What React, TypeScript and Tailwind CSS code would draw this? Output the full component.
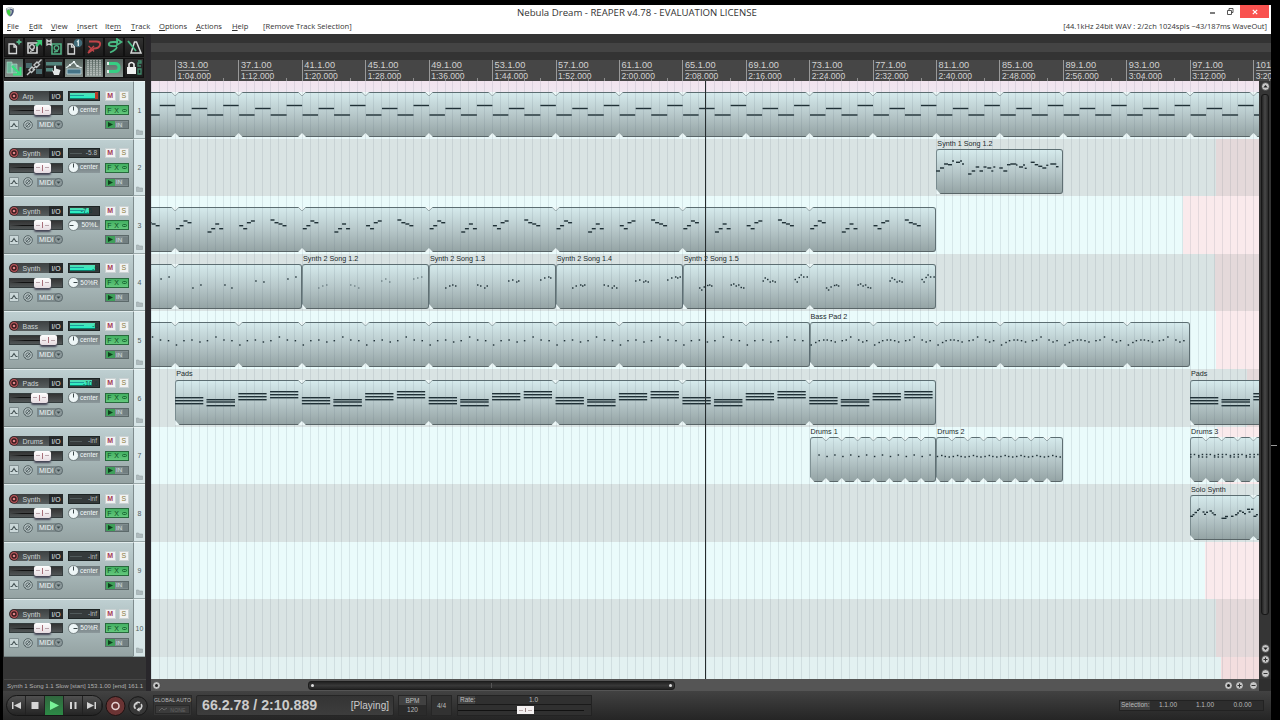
import type { ReactNode } from 'react'
import { clsx } from 'clsx'

const VIEW_START = 151
const VIEW_END = 1259
const FIRST_BAR_X = 175.2
const LOOP = 63.43
const LOOP2 = LOOP * 2

type Note = [x: number, y: number, w: number]

type ClipData = {
  name?: string
  from: number
  to: number
  loop: number
  notch?: number
  notes: Note[]
  open?: boolean
  faint?: boolean
}

type TrackData = {
  name: string
  fader: number
  pan: string
  panAngle: number
  meter?: number
  clip?: boolean
  level?: string
  tint: number
  clips: ClipData[]
}

const dots = (points: number[][]): Note[] => points.map(([x, y]) => [x, y, 1.5])

const arpNotes: Note[] = [[0.5, 23, 15.5], [16.5, 16.5, 15.5], [32, 23, 16], [48, 13.5, 15.5]]

const synthNotes: Note[] = [
  [0.7, 21.7, 4], [4.3, 18.7, 4], [8.3, 14, 4], [12.3, 15.7, 4],
  [32.3, 25, 4], [36, 21.7, 4], [40, 17, 4], [44, 21.7, 4],
  [64, 18.7, 4], [68, 21.7, 4], [71.7, 15.7, 4], [75.7, 14, 4],
  [95.3, 13, 4], [99.3, 15.7, 4], [103.3, 17, 4], [107.3, 18.7, 4],
]

const leadNotes: Note[] = [
  [0, 22, 4], [4, 19, 4], [8, 15, 4], [12, 15.7, 4], [16, 12, 2], [20, 13.3, 4], [24, 12, 2], [26, 15, 2],
  [32, 25, 3.5], [35.7, 22, 3.5], [39.7, 18, 3.5], [43.5, 22, 3.5], [47.5, 18, 3], [51.3, 19, 4], [55.3, 22, 2], [57.3, 18, 2],
  [63.3, 19, 3.5], [67.3, 22, 4], [71, 15.7, 3.5], [74.3, 15, 6], [80, 16, 1.5], [83, 18, 4], [87, 16, 2], [88.7, 19.3, 2],
  [94.7, 13.3, 4], [98.7, 15.7, 3.5], [102.3, 17.3, 4], [106.3, 19, 4], [110.3, 16.3, 2], [114.3, 15, 6], [120, 17.7, 2.5],
]

const songNotes = {
  one: dots([[17, 24], [25, 21], [49, 21], [56, 24], [80, 17], [88, 18], [112, 15], [120, 13]]),
  two: dots([[16, 24], [20, 22], [24, 21], [48, 21], [52, 22], [56, 24], [79, 17], [83, 15], [87, 18], [111, 15], [115, 14], [119, 13]]),
  three: dots([
    [16, 24], [20, 22], [23, 21], [26, 22], [48, 21], [51, 22], [55, 24], [57.5, 22],
    [79, 17], [83, 16], [87, 18], [89, 17], [111, 16], [115, 14], [119, 13], [121, 14],
  ]),
  four: dots([
    [16, 24], [19.5, 22], [24, 21], [26, 22], [28, 21], [47.5, 21], [51.5, 22], [55.5, 24], [57.5, 22], [60, 24],
    [79, 17], [83, 16], [87, 18], [89, 17], [91.5, 18], [111, 16], [115, 14], [119, 13], [121, 14], [123.5, 13],
  ]),
  five: dots([
    [16, 24], [18, 26], [20.5, 23], [24, 21.5], [26, 21], [28, 22], [47.5, 21], [50, 20], [52.5, 22], [55, 21], [57.5, 23.5], [60, 24],
    [79.5, 17], [81.5, 14], [84, 15.5], [86.5, 18], [89, 17], [91.5, 18], [111.5, 15.5], [113.5, 18], [115.5, 13.5], [117.5, 11], [120, 13], [123.5, 13],
  ]),
}

const bassNotes = dots([[0.5, 23], [8, 18.7], [16, 18], [24, 20], [31.5, 18.7], [40, 15], [48, 18], [56, 18.7]])

const bassPadNotes = dots([
  [0.5, 23], [5, 20.5], [8.5, 18.7], [13, 18], [16.5, 18], [20.5, 18.7], [24.5, 20], [31.5, 18.7], [35.5, 18], [40, 15], [48, 18], [52, 20], [56, 18.7],
])

const padNotes: Note[] = [
  [0, 17.7, 28.3], [0, 20.7, 28.3], [0, 23.7, 28.3],
  [31.5, 19.7, 28.5], [31.5, 22, 28.5], [31.5, 25.7, 28.5],
  [63.3, 13.7, 28.3], [63.3, 16.7, 28.3], [63.3, 19.7, 28.3],
  [95, 11.7, 28.3], [95, 14.7, 28.3], [95, 17.7, 28.3],
]

const drumNotes = {
  one: dots([[8.3, 18], [16.3, 19.5]]),
  two: dots([[0.7, 19.5], [5, 18.5], [8.5, 19.5], [12.5, 20]]),
  three: dots([[0, 17.5], [0, 20], [3.7, 17.5], [8, 18.5], [8, 20], [11.7, 17.5], [11.7, 20]]),
}

const soloNotes: Note[] = [
  [0, 21.3, 3], [2.5, 19.7, 2], [4.5, 17.5, 2.5], [7, 15.3, 2], [8.7, 14, 1.5], [12.5, 17, 2], [14, 19.3, 2], [16, 17.3, 2],
  [19.5, 16, 2.5], [21.7, 18, 2], [23.5, 19.7, 2.5], [31.5, 23.3, 5], [35, 21.5, 3], [41, 21.3, 2.5], [45, 19.7, 2.5],
  [47, 18, 2], [49, 16, 2.5], [52, 17.3, 2], [54, 18.7, 2], [57, 14.3, 3], [58.5, 17, 2], [61, 14.3, 2.5],
]

const bar = (n: number) => FIRST_BAR_X + ((n - 33) / 4) * LOOP

const tracks: TrackData[] = [
  {
    name: 'Arp', fader: 25, pan: 'center', panAngle: 0, meter: 25, clip: true, tint: 0,
    clips: [{ from: VIEW_START, to: VIEW_END, loop: LOOP, notch: LOOP, notes: arpNotes, open: true }],
  },
  {
    name: 'Synth', fader: 25, pan: 'center', panAngle: 0, level: '-5.8', tint: 43,
    clips: [{ name: 'Synth 1 Song 1.2', from: bar(81), to: bar(89), loop: LOOP2, notes: leadNotes }],
  },
  {
    name: 'Synth', fader: 25, pan: '50%L', panAngle: -90, meter: 19, level: '-7.5', tint: 76,
    clips: [{ from: VIEW_START, to: bar(81), loop: LOOP2, notch: LOOP2, notes: synthNotes }],
  },
  {
    name: 'Synth', fader: 25, pan: '50%R', panAngle: 90, meter: 25, level: '-9', tint: 44,
    clips: [
      { from: VIEW_START, to: bar(41), loop: LOOP2, notch: LOOP2, notes: songNotes.one },
      { name: 'Synth 2 Song 1.2', from: bar(41), to: bar(49), loop: LOOP2, notes: songNotes.two, faint: true },
      { name: 'Synth 2 Song 1.3', from: bar(49), to: bar(57), loop: LOOP2, notes: songNotes.three },
      { name: 'Synth 2 Song 1.4', from: bar(57), to: bar(65), loop: LOOP2, notes: songNotes.four },
      { name: 'Synth 2 Song 1.5', from: bar(65), to: bar(81), loop: LOOP2, notch: LOOP2, notes: songNotes.five },
    ],
  },
  {
    name: 'Bass', fader: 31, pan: 'center', panAngle: 0, meter: 25, level: '-6', tint: 43,
    clips: [
      { from: VIEW_START, to: bar(73), loop: LOOP, notch: LOOP, notes: bassNotes },
      { name: 'Bass Pad 2', from: bar(73), to: bar(97), loop: LOOP, notch: LOOP, notes: bassPadNotes },
    ],
  },
  {
    name: 'Pads', fader: 22, pan: 'center', panAngle: 0, meter: 22, level: '-10.6', tint: 12,
    clips: [
      { name: 'Pads', from: bar(33), to: bar(81), loop: LOOP2, notch: LOOP2, notes: padNotes },
      { name: 'Pads', from: bar(97), to: VIEW_END, loop: LOOP2, notes: padNotes, open: true },
    ],
  },
  {
    name: 'Drums', fader: 25, pan: 'center', panAngle: 0, level: '-inf', tint: 42,
    clips: [
      { name: 'Drums 1', from: bar(73), to: bar(81), loop: LOOP / 4, notch: LOOP / 4, notes: drumNotes.one },
      { name: 'Drums 2', from: bar(81), to: bar(89), loop: LOOP / 4, notch: LOOP / 4, notes: drumNotes.two },
      { name: 'Drums 3', from: bar(97), to: VIEW_END, loop: LOOP / 4, notch: LOOP / 4, notes: drumNotes.three, open: true },
    ],
  },
  {
    name: 'Synth', fader: 25, pan: 'center', panAngle: 0, level: '-inf', tint: 0,
    clips: [{ name: 'Solo Synth', from: bar(97), to: VIEW_END, loop: LOOP, notch: LOOP, notes: soloNotes, open: true }],
  },
  { name: 'Synth', fader: 25, pan: 'center', panAngle: 0, level: '-inf', tint: 54, clips: [] },
  { name: 'Synth', fader: 25, pan: '50%R', panAngle: 90, level: '-inf', tint: 43, clips: [] },
]

const menus = [
  { label: 'File', key: 0, width: 'w-[22px]' },
  { label: 'Edit', key: 0, width: 'w-[22px]' },
  { label: 'View', key: 0, width: 'w-[26px]' },
  { label: 'Insert', key: 0, width: 'w-[28px]' },
  { label: 'Item', key: 3, width: 'w-[26px]' },
  { label: 'Track', key: 0, width: 'w-[28px]' },
  { label: 'Options', key: 0, width: 'w-[37px]' },
  { label: 'Actions', key: 0, width: 'w-[36px]' },
  { label: 'Help', key: 0, width: 'w-[31px]' },
]

const timeLabels = [
  '1:04.000', '1:12.000', '1:20.000', '1:28.000', '1:36.000', '1:44.000', '1:52.000', '2:00.000', '2:08.000',
  '2:16.000', '2:24.000', '2:32.000', '2:40.000', '2:48.000', '2:56.000', '3:04.000', '3:12.000', '3:20',
]

function TitleBar() {
  return (
    <header className="h-[29px] shrink-0 bg-white font-['Open_Sans',sans-serif] text-[#333]">
      <div className="flex h-[15px] items-start">
        <svg className="mt-[2px] ml-[2px] size-[10px]" viewBox="0 0 10 10">
          <path d="M1 1.5Q5-.8 9 1.5Q9.6 7 5 9.8Q.4 7 1 1.5Z" fill="#9aa6ac" />
          <path d="M2 3.5Q5 1.5 5.3 5L5 9Q1.5 7 2 3.5Z" fill="#3ed43e" />
          <path d="M5 2.2Q8.5 2 7.7 5.2Q7 7.8 5.3 8.6" fill="none" stroke="#47537c" strokeWidth="1.3" />
          <path d="M2 2Q5 0 8 2" fill="none" stroke="#edf4f7" strokeWidth="0.8" />
        </svg>
        <h1 className="mr-auto ml-[502px] pt-[3px] text-[9.65px] leading-[10px] whitespace-nowrap">
          Nebula Dream - REAPER v4.78 - EVALUATION LICENSE
        </h1>
        <div className="flex h-[13px]">
          <svg className="h-[13px] w-[34px]" viewBox="0 0 34 13" fill="none" stroke="#444">
            <path d="M4 8h5" strokeWidth="1.4" />
            <path d="M21.5 5.5h4v4h-4zM23 5.5v-2h4v4h-1.5" strokeWidth="0.9" />
          </svg>
          <div className="mr-[2px] flex w-[29px] items-center justify-center bg-[#f9524f]">
            <svg className="size-[6px]" viewBox="0 0 6 6" stroke="#fff" strokeWidth="1.2">
              <path d="M.8.8l4.4 4.4M5.2.8L.8 5.2" />
            </svg>
          </div>
        </div>
      </div>
      <nav className="flex h-[14px] items-center pr-[4px] pl-[4px] text-[7.6px] leading-none whitespace-nowrap">
        {menus.map(({ label, key, width }) => (
          <span key={label} className={clsx('shrink-0', width)}>
            {label.slice(0, key)}
            <span className="underline underline-offset-1">{label[key]}</span>
            {label.slice(key + 1)}
          </span>
        ))}
        <span>[Remove Track Selection]</span>
        <span className="ml-auto text-[7.5px]">[44.1kHz 24bit WAV : 2/2ch 1024spls ~43/187ms WaveOut]</span>
      </nav>
    </header>
  )
}

const toolIcons: { lit?: boolean; art: ReactNode }[] = [
  { art: <><path d="M4 6h5l2.5 2.500v7H4z" stroke="#d5d8d8" /><path d="M9 6v3h2.500" stroke="#d5d8d8" /><path d="M14 1.500v5M11.500 4h5" stroke="#4fae82" strokeWidth="1.800" /></> },
  { art: <><path d="M3 5h9v10H3z" stroke="#d5d8d8" strokeWidth="1.600" /><circle cx="7" cy="9" r="2.300" stroke="#d5d8d8" /><path d="M5 13.500l4-1.500" stroke="#d5d8d8" /><path d="M10 7l3-3-2-2h6v6l-2-2-3 3z" stroke="none" fill="#38c873" /></> },
  { art: <><path d="M7 6h9v10H7z" stroke="#4fae82" strokeWidth="1.600" /><circle cx="11.500" cy="10" r="2.300" stroke="#4fae82" /><path d="M9 14l4-1" stroke="#4fae82" /><path d="M2 2l2 1.500L6 2v5L4 6 2 7z" stroke="#d5d8d8" /></> },
  { art: <><path d="M3 6h4l2.500 2.500V16H3z" stroke="#d5d8d8" /><path d="M6.500 6v3h3" stroke="#d5d8d8" /><circle cx="13" cy="5" r="4.300" fill="#416b78" stroke="none" /><path d="M12 4l1.300-1.300V8" stroke="#d5e6e8" /></> },
  { art: <><path d="M4 3.500h7q5 0 4 3.500t-6 3.500L3 15" stroke="#c04448" strokeWidth="2" /><path d="M3.500 8l5.500 5.500M9 8l-5.500 5.500" stroke="#c04448" strokeWidth="1.400" /></> },
  { art: <><path d="M13 4H8Q3 4 4 7q1 1.500 8 1" stroke="#48b983" strokeWidth="2" /><path d="M12 1l4.500 3L12 7zM12 9q-1 3-7 5.500" stroke="#48b983" strokeWidth="1.700" /></> },
  { art: <><path d="M6 15l3.500-11h2L16 15z" stroke="#d5d8d8" strokeWidth="1.500" /><path d="M11 13L3 3" stroke="#48b983" strokeWidth="1.800" /></> },
  { lit: true, art: <><path d="M2 3h5v11H2zM7 5h5v9H7z" fill="#70b89c" stroke="#b7d9ce" strokeWidth=".6" /><path d="M7 7l7 7m1.500-6v7.500H8" stroke="#35e37c" strokeWidth="2" /></> },
  { art: <><path d="M1 4h6v5H1zM11 10h6v5h-6z" fill="#4a6a6d" stroke="none" /><path d="M2 16l4-4m-2-1l3-3 2.500 2.500-3 3zM9 6l3-3 2.500 2.500-3 3zM7.500 10.500l3-3M13 4l3.500-3.500" stroke="#c3c8c8" strokeWidth="1.400" /></> },
  { art: <><path d="M1 3h16v3.500H1zM1 9h7v3.500H1z" fill="#53847c" stroke="none" /><path d="M9 7v5l-2-1 2 5h5l1.500-5L11 9.500V6.500z" fill="#e2e6e5" stroke="none" /></> },
  { lit: true, art: <><path d="M2 10h14v5H2z" fill="#467487" stroke="#bfd8dd" strokeWidth=".8" /><path d="M1 9l4-3 4-3 3 4 5 2" stroke="#dde7e7" /><path d="M4 5h2v2H4zM8 2h2v2H8zM11.500 6h2v2h-2z" fill="#eef5f5" stroke="none" /></> },
  { lit: true, art: <path d="M3 1v16M6 1v16M9 1v16M12 1v16M15 1v16" stroke="#e6eae9" strokeWidth="1" strokeDasharray="1.500 .5" /> },
  { lit: true, art: <><path d="M4 4.500h6q4 0 4 4t-4 4H4" stroke="#36ce83" strokeWidth="3" /><path d="M3 3v3M3 11v3" stroke="#e0efe8" strokeWidth="2" /></> },
  { art: <><path d="M2 8h9v7H2z" fill="#f0f0f0" stroke="none" /><path d="M4 8V5q2.500-3 5 0v3" stroke="#f0f0f0" strokeWidth="1.600" /><path d="M13 2h3v2h-3v3h3M13 10h3v5h-3z" stroke="#3f8a6c" /></> },
]

function Toolbar() {
  return (
    <div className="grid h-[47px] grid-cols-[repeat(7,20px)] grid-rows-[20px_20px] content-start gap-y-px bg-[#2a2a2a] pt-[3px]">
      {toolIcons.map(({ lit, art }, i) => (
        <div
          key={i}
          className={clsx(
            'flex items-center justify-center border border-[#111]',
            lit ? 'bg-linear-to-b from-[#56645f] to-[#899590]' : 'bg-linear-to-b from-[#323232] to-[#1b1b1b]',
          )}
        >
          <svg className="size-[18px] shrink-0" viewBox="0 0 18 18" fill="none" strokeWidth="1.3">
            {art}
          </svg>
        </div>
      ))}
    </div>
  )
}

function Meter({ track }: { track: TrackData }) {
  return (
    <div className="flex h-[10px] w-[32px] items-center border border-[#1d2424] bg-[#353a3b] px-px">
      {track.meter ? (
        <div className="h-[6px] shrink-0 border-b border-[#0b7f6c] bg-linear-to-b from-[#54dbb2] to-[#1cf0c6]" style={{ width: track.meter }}>
          <div className="mt-[2px] h-px w-[14px] bg-[#1d9b9b]" />
        </div>
      ) : (
        <div className="h-px w-[12px] bg-[#515a5b]" />
      )}
      {track.clip && <div className="h-[7px] w-[3px] shrink-0 bg-[#b93826]" />}
      {track.level && (
        <span
          className={clsx(
            'w-[12px] pt-px text-right text-[6.5px] leading-none whitespace-nowrap',
            track.meter ? '-ml-[9px] text-[#173b39]' : 'ml-[3px] text-[#b3bebf]',
          )}
        >
          {track.level}
        </span>
      )}
    </div>
  )
}

function TrackPanel({ track, index }: { track: TrackData; index: number }) {
  return (
    <div className="flex h-[57.6px] shrink-0">
      <div className="flex w-[129px] flex-col gap-[4.5px] border-t border-b border-t-[#e1eced] border-b-[#728080] bg-linear-to-b from-[#becfd1] via-[#a9b9ba] to-[#94a2a2] pt-[8.5px] pl-[5px]">
        <div className="flex h-[10px] gap-[5px]">
          <div className="flex w-[54px] rounded-l-full bg-linear-to-b from-[#3c4041] to-[#575d5e] text-[7px] leading-[9px] text-[#ccd4d5]">
            <svg className="size-[10px]" viewBox="0 0 10 10" fill="none">
              <circle cx="5" cy="5" r="4.5" fill="#35191c" />
              <circle cx="5" cy="5" r="3.3" stroke="#b5575b" strokeWidth="1.2" />
              <circle cx="5" cy="5" r="1.3" fill="#dc8084" />
            </svg>
            <span className="w-[30px] pt-px pl-[3.5px]">{track.name}</span>
            <span className="w-[14px] bg-[#252829] pt-px text-center text-[6.8px] text-[#e3e9e9]">I/O</span>
          </div>
          <Meter track={track} />
          <div className="flex gap-[3px] text-center text-[7px] leading-[8px] font-bold">
            <span className="w-[10.5px] border border-[#cbd2d3] bg-[#f1f3f3] text-[#a43b56]">M</span>
            <span className="w-[10.5px] border border-[#cbd2d3] bg-[#f1f3f3] font-normal text-[#8a7b42]">S</span>
          </div>
        </div>
        <div className="flex h-[10px] gap-[5px]">
          <div className="flex w-[54px] items-center border border-[#333b3c] bg-linear-to-b from-[#333] to-[#505556]">
            <div className="h-px shrink-0 bg-linear-to-r from-transparent via-[#111] to-[#111]" style={{ width: track.fader - 1 }} />
            <div className="flex h-[10px] w-[17px] shrink-0 items-center justify-center gap-[2px] rounded-[2px] bg-linear-to-b from-white to-[#e6dce1] shadow-[0_2px_2px_#445]">
              <i className="h-px w-[4px] bg-[#b9a4ab]" />
              <i className="h-[6px] w-px bg-[#a86f79]" />
              <i className="h-px w-[4px] bg-[#b9a4ab]" />
            </div>
          </div>
          <div className="flex w-[32px] items-center rounded-l-full bg-linear-to-b from-[#6c777a] to-[#8b979a]">
            <svg className="size-[11px] shrink-0" viewBox="0 0 11 11">
              <circle cx="5.5" cy="5.5" r="5" fill="#eef6f7" stroke="#5d6a6c" strokeWidth=".7" />
              <path d="M5.5 5.5V1.5" stroke="#3c484a" transform={`rotate(${track.panAngle} 5.5 5.5)`} />
            </svg>
            <span className="flex-1 pr-[2px] text-right text-[6.5px] leading-none text-[#f4fafb]">{track.pan}</span>
          </div>
          <div className="flex w-[24px] items-center justify-around border border-[#27693c] bg-linear-to-b from-[#43b062] to-[#63c87c] text-[7px] leading-none text-[#0e4b22]">
            <span>F</span>
            <span>X</span>
            <i className="h-[3px] w-[5px] rounded-full border border-[#1a6a34]" />
          </div>
        </div>
        <div className="flex h-[10px] items-center">
          <svg className="h-[10px] w-[24px]" viewBox="0 0 24 10" fill="none" stroke="#4a5759" strokeWidth=".9">
            <path d="M.5.5h9v9h-9z" fill="#cad7d8" stroke="#7d8b8d" />
            <path d="M1.500 6.500h1.500l2-3 2 3h1.500" strokeWidth="1.200" />
            <circle cx="19" cy="5" r="4.300" fill="#bdcacb" />
            <path d="M16.800 5a2.200 2.200 0 1 0 4.400 0a2.200 2.200 0 1 0-4.400 0M16.500 7.500l5-5" />
          </svg>
          <div className="ml-[4px] flex h-[9px] w-[26px] items-center rounded-r-full bg-[#7b888a] pl-[2px] text-[7px] leading-none text-[#f4f9f9]">
            <span className="w-[15px]">MIDI</span>
            <svg className="size-[9px]" viewBox="0 0 9 9">
              <circle cx="4.500" cy="4.500" r="4" fill="#8b989a" stroke="#4f5c5e" strokeWidth=".7" />
              <path d="M2.500 3.500h4l-2 2.300z" fill="#39474a" />
            </svg>
          </div>
          <div className="ml-[42px] flex h-[9px] w-[24px] items-center border border-[#5c696a] bg-[#7f8c8e] text-[6px] leading-none text-[#dce4e5]">
            <div className="flex h-full w-[9px] items-center justify-center bg-[#3f9f5a]">
              <svg className="size-[5px]" viewBox="0 0 5 5">
                <path d="M0 0l5 2.500-5 2.500z" fill="#0d3f1d" />
              </svg>
            </div>
            <span className="pl-px">IN</span>
            <i className="ml-px h-[6px] flex-1 bg-[#727f81]" />
          </div>
        </div>
      </div>
      <div className="flex w-[12px] flex-col items-center justify-end border-t border-b border-l border-t-[#edf5f6] border-b-[#9baaab] border-l-[#7e8b8d] bg-linear-to-b from-[#dcebed] to-[#d6e4e6] text-[7px] leading-none text-[#525d60]">
        <span className="mb-[15px]">{index + 1}</span>
        <svg className="mb-[3px] h-[6px] w-[7px]" viewBox="0 0 7 6" fill="#aebabd" stroke="#95a2a5" strokeWidth=".6">
          <path d="M.5 1h2l1 1h3v3.500h-6z" />
        </svg>
      </div>
    </div>
  )
}

function Ruler() {
  return (
    <div className="h-[47px] overflow-hidden bg-[#333] pt-[9px]">
      <div className="h-[9px] bg-[#444]" />
      <div className="mt-[8px] flex h-[21px] bg-[#464646] pl-[24px]">
        {timeLabels.map((time, i) => (
          <div key={time} className="w-[63.43px] shrink-0 border-l border-[#999]">
            <div className="relative h-[21px]">
              <div className="flex flex-col items-start pl-[1.5px] whitespace-nowrap text-[#d2d2d2]">
                <span className="border-b border-[#999] pr-px text-[9.2px] leading-[10px]">
                  {33 + i * 4}
                  {i < 17 && '.1.00'}
                </span>
                <span className="pt-px text-[8.6px] leading-[8px]">{time}</span>
              </div>
              <svg className="absolute bottom-0 left-0 h-[3px] w-[63px]" viewBox="0 0 63 3" stroke="#8d8d8d">
                <path d="M15.500 0v3M31.500 0v3M47.500 0v3" />
              </svg>
            </div>
          </div>
        ))}
      </div>
    </div>
  )
}

// clips that run in from the left of the view loop from a bar line off screen
function loopStarts(clip: ClipData, step: number) {
  const origin = clip.from === VIEW_START ? FIRST_BAR_X - LOOP2 : clip.from
  const starts: number[] = []
  for (let x = origin; x < clip.to - 1; x += step) starts.push(x - clip.from)
  return starts
}

function Clip({ clip, previous }: { clip: ClipData; previous: number }) {
  const width = clip.to - clip.from
  const inView = clip.from > VIEW_START
  const notches = clip.notch ? loopStarts(clip, clip.notch).filter((x) => x > 2) : []
  return (
    <div className="shrink-0" style={{ marginLeft: clip.from - previous, width }}>
      <div className="h-[10.6px] pt-[1.5px] pl-px text-[7.2px] leading-[8px] whitespace-nowrap text-[#20282a]">{clip.name}</div>
      <div
        className={clsx(
          'h-[45px] border-y border-t-[#5c6e72] border-b-[#5a6668] bg-linear-to-b from-[#d5eaec] via-[#b7c8ca] to-[#95a4a5]',
          !clip.open && 'rounded-r-[3px] border-r border-r-[#5f6f73]',
          inView && 'rounded-l-[3px] border-l border-l-[#7f9194]',
        )}
      >
        <svg className={clsx('-mt-px block h-[45px] max-w-none', inView && '-ml-px')} width={width} viewBox={`0 0 ${width} 45`}>
          <g fill={clip.faint ? '#6f8286' : '#1f3036'}>
            {loopStarts(clip, clip.loop).map((start) =>
              clip.notes.map(([x, y, w]) =>
                start + x < width - 1 ? (
                  <rect key={`${start}-${x}-${y}`} x={start + x} y={y - 0.7} width={w} height="1.4" />
                ) : null,
              ),
            )}
          </g>
          {notches.map((x) => (
            <g key={x} fill="#edf8f8">
              <path d={`M${x - 4} 0L${x} 4L${x + 4} 0`} stroke="#7d8e91" strokeWidth=".7" />
              <path d={`M${x - 4} 45L${x} 41L${x + 4} 45`} />
            </g>
          ))}
          {inView && <path d="M0 45V40L4.500 45z" fill="#edf8f8" />}
        </svg>
      </div>
    </div>
  )
}

function Lane({ track, index }: { track: TrackData; index: number }) {
  return (
    <div
      className={clsx(
        'relative flex h-[57.6px] shrink-0',
        index === 0 ? 'bg-linear-to-b from-[#f1e3ee] to-[#e8f7f8]' : index % 2 ? 'bg-[#d9e3e3]' : 'bg-[#eafbfb]',
      )}
    >
      {track.tint > 0 && (
        <div className={clsx('absolute inset-y-0 right-0', index % 2 ? 'bg-[#e4d9da]' : 'bg-[#faeaec]')} style={{ width: track.tint }} />
      )}
      <div className="relative flex">
        {track.clips.map((clip, i) => (
          <Clip key={clip.from} clip={clip} previous={i ? track.clips[i - 1].to : VIEW_START} />
        ))}
      </div>
    </div>
  )
}

function Arrange() {
  const lines: number[] = []
  for (let x = FIRST_BAR_X - VIEW_START - 24; x < VIEW_END - VIEW_START; x += LOOP / 8) lines.push(Math.round(x))
  return (
    <div className="relative h-[598px] overflow-hidden">
      <div className="flex h-full flex-col bg-[#e3f1f1]">
        {tracks.map((track, i) => (
          <Lane key={i} track={track} index={i} />
        ))}
        <div className="ml-auto w-[38px] flex-1 bg-[#f3dedf]" />
      </div>
      <svg className="absolute inset-0 size-full" viewBox="0 0 1108 598" shapeRendering="crispEdges">
        {lines.map((x) => (
          <rect key={x} x={x} y="0" width="1" height="598" fill="#567" fillOpacity=".13" />
        ))}
        <rect x="554" y="0" width="1" height="598" fill="#252c2e" />
      </svg>
    </div>
  )
}

function RoundKnob({ glyph }: { glyph: 'dot' | 'plus' | 'minus' | 'up' | 'down' }) {
  const shapes = {
    dot: <circle cx="4.5" cy="4.5" r="1.5" fill="#222" />,
    plus: <path d="M2.5 4.5h4M4.5 2.5v4" stroke="#333" />,
    minus: <path d="M2.5 4.5h4" stroke="#333" />,
    up: <path d="M2.3 5.5l2.2-2.5 2.2 2.5z" fill="#222" />,
    down: <path d="M2.3 3.5l2.2 2.5 2.2-2.5z" fill="#222" />,
  }
  return (
    <svg className="size-[9px] shrink-0" viewBox="0 0 9 9">
      <circle cx="4.5" cy="4.5" r="3.9" fill="#c6c6c6" stroke="#222" strokeWidth=".6" />
      {shapes[glyph]}
    </svg>
  )
}

function VerticalScroll() {
  return (
    <div className="flex h-[598px] w-[12px] flex-col items-center bg-[#353535] pt-px">
      <RoundKnob glyph="up" />
      <div className="mt-[3px] h-[521px] w-[8px] rounded-[3px] border border-[#171717] bg-linear-to-r from-[#242424] via-[#484848] to-[#292929]" />
      <div className="mt-[29px] flex flex-col gap-[2px]">
        <RoundKnob glyph="down" />
        <RoundKnob glyph="plus" />
      </div>
      <div className="mt-[5px]">
        <RoundKnob glyph="minus" />
      </div>
    </div>
  )
}

function HorizontalScroll() {
  return (
    <div className="flex h-[12px] items-center bg-[#555] pl-px">
      <RoundKnob glyph="dot" />
      <div className="ml-[147px] flex h-[9px] w-[367px] items-center justify-between rounded-[3px] border border-[#1d1d1d] bg-linear-to-b from-[#222] via-[#383838] to-[#242424] px-[2px]">
        <i className="size-[3px] rounded-full bg-[#ddd]" />
        <i className="h-[5px] w-px bg-[#555]" />
        <i className="size-[3px] rounded-full bg-[#ddd]" />
      </div>
      <div className="ml-auto flex items-center gap-[2px]">
        <RoundKnob glyph="dot" />
        <RoundKnob glyph="plus" />
        <span className="mr-px ml-[3px] flex">
          <RoundKnob glyph="minus" />
        </span>
      </div>
    </div>
  )
}

function Transport() {
  const buttons = [
    <path key="start" d="M4 3v7h1.500V3zM13 3v7L6 6.500z" />,
    <path key="stop" d="M4.500 3h7v7h-7z" />,
    <path key="play" d="M4 2l9 4.500-9 4.500z" />,
    <path key="pause" d="M5 3h2v7H5zM9.500 3h2v7h-2z" />,
    <path key="end" d="M3 3v7l7-3.500zM10.500 3v7H12V3z" />,
  ]
  return (
    <footer className="flex h-[29px] shrink-0 items-center bg-linear-to-b from-[#424242] to-[#252525] pl-[3px] text-[#bbb]">
      <div className="flex h-[21px] w-[97px] overflow-hidden rounded-full border border-[#161616] bg-linear-to-b from-[#505050] to-[#242424]">
        {buttons.map((shape, i) => (
          <div
            key={i}
            className={clsx(
              'flex flex-1 items-center justify-center border-r border-[#222]',
              i === 2 && 'bg-linear-to-b from-[#30663e] to-[#2c8a46]',
            )}
          >
            <svg className="h-[13px] w-[16px]" viewBox="0 0 16 13" fill={i === 2 ? '#78f398' : '#d5d5d5'}>
              {shape}
            </svg>
          </div>
        ))}
      </div>
      <svg className="ml-[2px] h-[22px] w-[43px]" viewBox="0 0 43 22" fill="none">
        <circle cx="10.500" cy="11" r="9.500" fill="#6b3434" stroke="#1d1212" />
        <circle cx="10.500" cy="11" r="3.500" stroke="#e6d2d2" strokeWidth="1.600" />
        <circle cx="33" cy="11" r="9.300" fill="#383838" stroke="#171717" />
        <path d="M30.500 13.800a3.800 3.800 0 0 1 4.500-6M36.200 9a3.800 3.800 0 0 1-3.500 5.800" stroke="#d2d2d2" strokeWidth="1.600" />
        <path d="M34.500 12l-3 2.800 3 2zM28.500 9.500h4v-3z" fill="#d2d2d2" />
      </svg>
      <div className="ml-[5px] flex h-[21px] w-[39px] flex-col items-center gap-[2px] border border-[#292929] bg-[#353535] pt-px text-[5.2px] leading-[6px] tracking-[.1px] whitespace-nowrap">
        <span>GLOBAL AUTO</span>
        <span className="flex h-[9px] w-[35px] items-center justify-center gap-[3px] border border-[#292929] bg-[#3b3b3b] text-[#646464]">
          <svg className="h-[5px] w-[8px]" viewBox="0 0 8 5" fill="none" stroke="#646464">
            <path d="M0 4L3 1l2 2 3-2" />
          </svg>
          NONE
        </span>
      </div>
      <div className="ml-[4px] flex h-[21px] w-[198px] items-center justify-between rounded-[2px] border border-[#262626] bg-linear-to-b from-[#343434] to-[#3d3d3d] pr-[4px] pl-[5px] text-[#cbcbcb]">
        <span className="text-[14.2px] leading-none font-bold">66.2.78 / 2:10.889</span>
        <span className="text-[10px] leading-none">[Playing]</span>
      </div>
      <div className="ml-[4px] h-[21px] w-[29px] border border-[#262626] bg-[#2b2b2b] text-center text-[6.5px] leading-[9px]">
        <div className="bg-[#414141]">BPM</div>
        <div>120</div>
      </div>
      <div className="ml-[4px] flex h-[21px] w-[21px] items-center justify-center border border-[#262626] bg-[#323232] text-[6.5px]">4/4</div>
      <div className="ml-[5px] h-[21px] w-[135px] border border-[#232323] bg-[#303030] text-[6.5px] leading-[8px]">
        <div className="flex h-[9px] border-b border-[#1a1a1a]">
          <span className="w-[17px] bg-[#424242] pl-[2px]">Rate:</span>
          <span className="pl-[54px]">1.0</span>
        </div>
        <div className="flex h-[10px] items-center">
          <i className="h-px w-[59px] bg-[#111]" />
          <div className="flex h-[8px] w-[17px] items-center justify-center gap-[2px] bg-[#f3f0f0]">
            <i className="h-px w-[4px] bg-[#b9a9a9]" />
            <i className="h-[4px] w-px bg-[#9b8383]" />
            <i className="h-px w-[4px] bg-[#b9a9a9]" />
          </div>
          <i className="h-px w-[50px] bg-[#111]" />
        </div>
      </div>
      <div className="mr-[7px] ml-auto flex h-[11px] w-[145px] items-center border border-[#222] bg-[#2d2d2d] text-[6.5px] leading-none">
        <span className="flex h-full w-[30px] items-center bg-[#3e3e3e] pl-px">Selection:</span>
        <span className="w-[36px] text-center">1.1.00</span>
        <span className="w-[38px] text-center">1.1.00</span>
        <span className="w-[37px] text-center">0.0.00</span>
      </div>
    </footer>
  )
}

export default function App() {
  return (
    <div className="flex h-[720px] w-[1280px] overflow-hidden bg-black pt-[5px] pl-[3px] font-['Liberation_Sans',sans-serif]">
      <div className="flex w-[1268px] flex-col bg-[#2f2f2f]">
        <TitleBar />
        <main className="flex h-[657px]">
          <section className="flex w-[148px] flex-col border-r-[5px] border-[#29272b] bg-[#353535] pl-px">
            <Toolbar />
            <div className="flex h-[576px] flex-col">
              {tracks.map((track, i) => (
                <TrackPanel key={i} track={track} index={i} />
              ))}
            </div>
            <div className="mt-[22px] h-[12px] border-t border-[#484848] pl-[3px] text-[6.1px] leading-[11px] whitespace-nowrap text-[#b0b0b0]">
              Synth 1 Song 1.1 Slow [start] 153.1.00 [end] 161.1
            </div>
          </section>
          <section className="w-[1120px]">
            <Ruler />
            <div className="flex">
              <div className="w-[1108px]">
                <Arrange />
                <HorizontalScroll />
              </div>
              <VerticalScroll />
            </div>
          </section>
        </main>
        <Transport />
      </div>
      <div className="mt-[440px] h-px w-[6px] bg-[#999]" />
    </div>
  )
}
